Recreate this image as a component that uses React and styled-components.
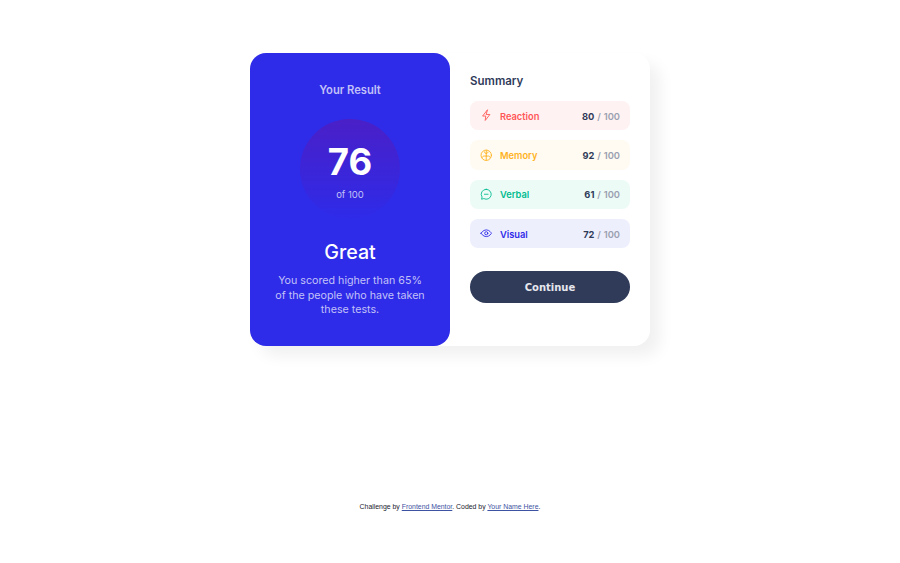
import React from "react";
import styled, { createGlobalStyle } from "styled-components";

const Global = createGlobalStyle`
  html, body { margin: 0; padding: 0; background: #fff; }
  body { font-family: "Inter", "Noto Sans", sans-serif; }
`;
const Page = styled.main`
  height: 563px;
  display: flex;
  flex-direction: column;
  align-items: center;
  padding-top: 53px;
  box-sizing: border-box;
`;
const Card = styled.section`
  width: 400px;
  height: 293px;
  display: grid;
  grid-template-columns: 200px 200px;
  border-radius: 16px;
  background: #fff;
  box-shadow: 10px 10px 15px rgba(0, 0, 0, 0.06);
`;
const ResultPanel = styled.div`
  background: #2e2be9;
  border-radius: 16px;
  display: flex;
  flex-direction: column;
  align-items: center;
  padding-top: 29px;
  box-sizing: border-box;
  text-align: center;
`;
const ResultTitle = styled.h1`
  margin: 0;
  font-size: 11.2px;
  line-height: 16px;
  font-weight: 600;
  color: #c2c1f7;
`;
const Circle = styled.div`
  width: 100px;
  height: 100px;
  margin-top: 21px;
  border-radius: 50%;
  background: linear-gradient(180deg, #4a1fc7 0%, rgba(47, 43, 233, 0) 100%);
  display: flex;
  flex-direction: column;
  align-items: center;
`;
const Score = styled.div`
  margin-top: 20px;
  font-size: 36.5px;
  line-height: 46px;
  font-weight: 700;
  color: #fff;
`;
const Of = styled.div`
  margin-top: 3px;
  font-size: 9.5px;
  line-height: 14px;
  color: #c2c1f7;
`;
const Grade = styled.h2`
  margin: 19px 0 0;
  font-size: 19.7px;
  line-height: 28px;
  font-weight: 500;
  color: #fff;
`;
const Blurb = styled.p`
  margin: 8px 0 0;
  width: 152px;
  font-size: 10.7px;
  line-height: 14.5px;
  color: #c2c1f7;
`;
const SummaryPanel = styled.div`
  padding: 20px 20px 0;
  display: flex;
  flex-direction: column;
`;
const SummaryTitle = styled.h2`
  margin: 0;
  font-size: 11.5px;
  line-height: 17px;
  font-weight: 600;
  color: #303b5a;
`;
const Rows = styled.div`
  margin-top: 11px;
  display: flex;
  flex-direction: column;
  gap: 10px;
`;
const Row = styled.div`
  height: 29.3px;
  padding: 0 10px;
  box-sizing: border-box;
  border-radius: 8px;
  background: ${(p) => p.$bg};
  display: flex;
  align-items: center;
  color: ${(p) => p.$fg};
`;
const RowLabel = styled.span`
  margin-left: 7.5px;
  padding-top: 1px;
  font-size: 9.3px;
  font-weight: 600;
  flex: 1;
`;
const Value = styled.span`
  padding-top: 1px;
  font-size: 9.3px;
  font-weight: 600;
  word-spacing: 0.6px;
  color: #9aa0b0;
`;
const Strong = styled.span`
  color: #303b5a;
  font-weight: 700;
`;
const Continue = styled.button`
  margin-top: 23px;
  height: 32px;
  border: 0;
  border-radius: 16px;
  background: #303b5a;
  color: #e6e7ee;
  font-family: "DejaVu Sans", sans-serif;
  font-size: 10px;
  font-weight: 700;
`;
const Footer = styled.footer`
  margin-top: 156px;
  font-family: "Liberation Sans", sans-serif;
  font-size: 6.9px;
  line-height: 10px;
  color: #1a1a2e;
  text-align: center;
`;
const FooterLink = styled.a`
  color: #3e52a3;
  text-decoration: underline;
`;

const Icon = ({ children }) => (
  <svg width="12.5" height="12.5" viewBox="0 0 24 24" fill="none" stroke="currentColor" strokeWidth="1.7" strokeLinecap="round" strokeLinejoin="round" style={{ flexShrink: 0 }}>
    {children}
  </svg>
);

const rows = [
  { name: "Reaction", v: 80, bg: "#fff2f2", fg: "#ff5757", icon: <path d="M14 2 5 13.5h6L10 22l9-11.5h-6.5z" /> },
  {
    name: "Memory", v: 92, bg: "#fffbf2", fg: "#ffb21e",
    icon: (<><circle cx="12" cy="12" r="10" /><path d="M12 2.5v19M12 8.5c-2 0-3.5-1-3.5-3M12 8.5c2 0 3.5-1 3.5-3M12 13.5H8c-2 0-3 1-3.5 2.5M12 13.5h4c2 0 3 1 3.5 2.5" /></>),
  },
  {
    name: "Verbal", v: 61, bg: "#edfbf7", fg: "#00bb8f",
    icon: (<><path d="M12 2.5a9.5 9.5 0 1 1-4.6 17.8L3 21.5l1-4.2A9.5 9.5 0 0 1 12 2.5z" /><path d="M8.5 12h7" /></>),
  },
  {
    name: "Visual", v: 72, bg: "#eeeffd", fg: "#2e2be9",
    icon: (<><path d="M2 12s3.6-6.5 10-6.5S22 12 22 12s-3.6 6.5-10 6.5S2 12 2 12z" /><circle cx="12" cy="12" r="3" /></>),
  },
];

export default function App() {
  return (
    <Page>
      <Global />
      <Card>
        <ResultPanel>
          <ResultTitle>Your Result</ResultTitle>
          <Circle>
            <Score>76</Score>
            <Of>of 100</Of>
          </Circle>
          <Grade>Great</Grade>
          <Blurb>You scored higher than 65% of the people who have taken these tests.</Blurb>
        </ResultPanel>
        <SummaryPanel>
          <SummaryTitle>Summary</SummaryTitle>
          <Rows>
            {rows.map((r) => (
              <Row key={r.name} $bg={r.bg} $fg={r.fg}>
                <Icon>{r.icon}</Icon>
                <RowLabel>{r.name}</RowLabel>
                <Value><Strong>{r.v}</Strong> / 100</Value>
              </Row>
            ))}
          </Rows>
          <Continue>Continue</Continue>
        </SummaryPanel>
      </Card>
      <Footer>
        Challenge by <FooterLink href="#">Frontend Mentor</FooterLink>. Coded by <FooterLink href="#">Your Name Here</FooterLink>.
      </Footer>
    </Page>
  );
}
